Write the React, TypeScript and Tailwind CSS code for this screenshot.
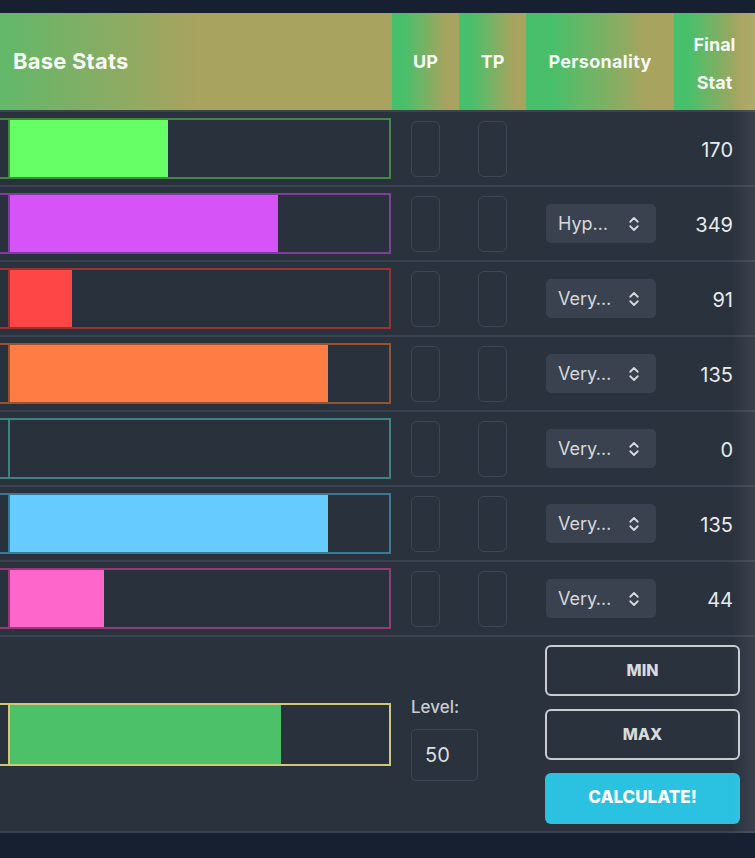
import { ChevronsUpDown } from "lucide-react";

type Row = {
  fill: number;
  fillColor: string;
  edge: string;
  personality?: string;
  final: number;
};

const rows: Row[] = [
  { fill: 160, fillColor: "bg-[#66ff66]", edge: "border-[#438a40]", final: 170 },
  { fill: 270, fillColor: "bg-[#d653f7]", edge: "border-[#7f3d9c]", personality: "Hyp…", final: 349 },
  { fill: 64, fillColor: "bg-[#ff4646]", edge: "border-[#963434]", personality: "Very…", final: 91 },
  { fill: 320, fillColor: "bg-[#ff7d45]", edge: "border-[#95532f]", personality: "Very…", final: 135 },
  { fill: 0, fillColor: "bg-[#49b0ac]", edge: "border-[#3b8480]", personality: "Very…", final: 0 },
  { fill: 320, fillColor: "bg-[#66ccff]", edge: "border-[#387b96]", personality: "Very…", final: 135 },
  { fill: 96, fillColor: "bg-[#ff66cc]", edge: "border-[#913c74]", personality: "Very…", final: 44 },
];

const headGrad = "bg-[linear-gradient(to_right,#48c06b_18%,#a8a35e_82%)]";

function Bar({ fill, fillColor, edge }: { fill: number; fillColor: string; edge: string }) {
  return (
    <div className={`flex h-[61px] w-full border-2 border-l-0 ${edge} bg-[#29313c]`}>
      <div className={`ml-[8px] h-full border-l-[2px] ${edge} ${fillColor}`} style={{ width: fill }} />
    </div>
  );
}

function PointBox() {
  return <div className="h-[56px] w-[29px] rounded-[6px] border-[1.5px] border-[#3d4653]" />;
}

export default function App() {
  return (
    <div className="min-h-[858px] bg-[#162030] pt-[13px] pb-[23px] font-['Inter','Noto_Sans',sans-serif] text-[#e8eaec]">
      <div className="relative overflow-hidden bg-[#2a323e]">
        {/* header */}
        <div className="grid h-[97px] grid-cols-[392px_67px_67px_148px_1fr] text-white/95">
          <div className="flex items-center bg-[linear-gradient(to_right,#62b86a,#a8a35e_50%)] pl-[13px] text-[22px] font-bold tracking-[0.2px]">
            Base Stats
          </div>
          <div className={`flex items-center justify-center ${headGrad} text-[18px] font-bold`}>UP</div>
          <div className={`flex items-center justify-center ${headGrad} text-[18px] font-bold`}>TP</div>
          <div className={`flex items-center justify-center ${headGrad} text-[18px] font-bold tracking-[0.3px]`}>Personality</div>
          <div className={`flex items-center justify-center ${headGrad} pt-[5px] text-center text-[18px] font-bold leading-[38px]`}>
            Final
            <br />
            Stat
          </div>
        </div>

        {rows.map((r, i) => (
          <div
            key={i}
            className="grid h-[75px] grid-cols-[392px_67px_67px_148px_1fr] items-center border-t-2 border-[#3a434f]"
          >
            <div className="pr-[1px]">
              <Bar fill={r.fill} fillColor={r.fillColor} edge={r.edge} />
            </div>
            <div className="flex justify-center">
              <PointBox />
            </div>
            <div className="flex justify-center">
              <PointBox />
            </div>
            <div className="flex justify-center pl-[2px]">
              {r.personality && (
                <div className="flex h-[39px] w-[110px] items-center justify-between rounded-[5px] bg-[#39424e] pl-[12px] pr-[13px] text-[18px] text-[#d6d9dd]">
                  <span>{r.personality}</span>
                  <ChevronsUpDown size={18} strokeWidth={2.4} className="text-[#d6d9dd]" />
                </div>
              )}
            </div>
            <div className="pr-[22px] pt-[3px] text-right text-[20px] text-[#e8eaec]">{r.final}</div>
          </div>
        ))}

        {/* totals */}
        <div className="grid h-[198px] grid-cols-[392px_134px_1fr] items-center border-y-2 border-[#3a434f]">
          <div className="pr-[1px]">
            <div className="flex h-[63px] w-full border-2 border-l-0 border-[#cfc77a] bg-[#29313c]">
              <div className="ml-[8px] h-full w-[273px] border-l-[2px] border-[#cfc77a] bg-[#4cc16a]" />
            </div>
          </div>
          <div className="flex flex-col pl-[19px] pt-[8px]">
            <span className="text-[17px] font-medium text-[#c8ccd1]">Level:</span>
            <div className="mt-[8px] flex h-[52px] w-[67px] items-center rounded-[5px] border-[1.5px] border-[#3d4653] pl-[13px] text-[20px] text-[#dcdfe2]">
              50
            </div>
          </div>
          <div className="flex flex-col gap-[14px] pl-[19px] pr-[15px]">
            <button className="flex h-[51px] items-center justify-center rounded-[6px] border-2 border-[#c9cdd1] text-[16px] font-extrabold text-[#d8dbde]">
              MIN
            </button>
            <button className="-mt-[1px] flex h-[51px] items-center justify-center rounded-[6px] border-2 border-[#c9cdd1] text-[16px] font-extrabold text-[#d8dbde]">
              MAX
            </button>
            <button className="-mt-[1px] flex h-[51px] items-center justify-center rounded-[6px] bg-[#2bc1e1] text-[17px] font-extrabold text-white">
              CALCULATE!
            </button>
          </div>
        </div>

        {/* right scroll fade */}
        <div className="pointer-events-none absolute inset-y-0 right-0 w-[24px] bg-[linear-gradient(to_right,transparent,rgba(255,255,255,0.08))]" />
      </div>
    </div>
  );
}
